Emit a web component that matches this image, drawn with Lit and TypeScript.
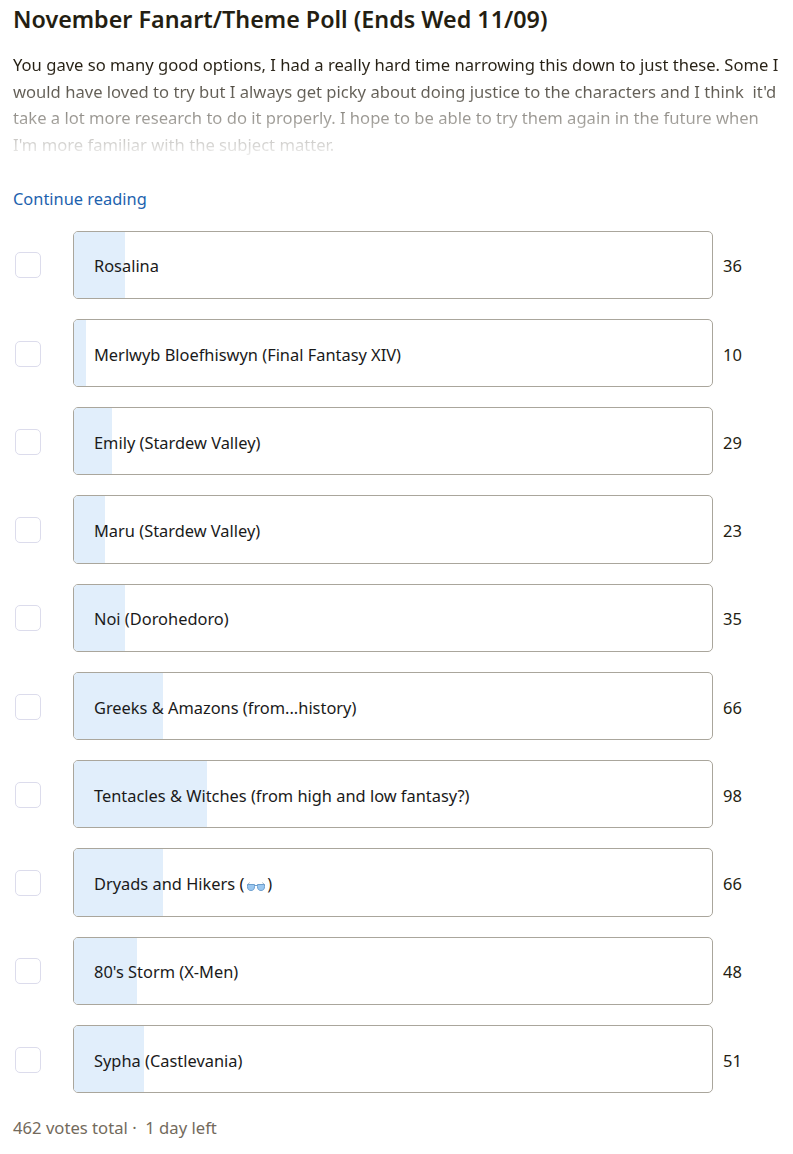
import { LitElement, html, css } from "lit";
import { customElement } from "lit/decorators.js";

const glasses = html`<svg class="emoji" viewBox="0 0 18 9" width="18" height="9" aria-hidden="true">
  <path d="M0.5 3 L2.5 0.5 M17.5 3 L15.5 0.5" stroke="#9fb2c4" stroke-width="1" fill="none"/>
  <path d="M0.5 2.5 H7.5 V4.5 C7.5 7 6.5 8.5 4 8.5 C1.5 8.5 0.5 7 0.5 4.5 Z" fill="#9cc8f0" stroke="#6d9fce" stroke-width="1"/>
  <path d="M10.5 2.5 H17.5 V4.5 C17.5 7 16.5 8.5 14 8.5 C11.5 8.5 10.5 7 10.5 4.5 Z" fill="#9cc8f0" stroke="#6d9fce" stroke-width="1"/>
  <path d="M7.5 3.5 H10.5" stroke="#6d9fce" stroke-width="1"/>
</svg>`;

const rows: { label: unknown; votes: number; w: number }[] = [
  { label: "Rosalina", votes: 36, w: 51 },
  { label: "Merlwyb Bloefhiswyn (Final Fantasy XIV)", votes: 10, w: 12 },
  { label: "Emily (Stardew Valley)", votes: 29, w: 38 },
  { label: "Maru (Stardew Valley)", votes: 23, w: 31 },
  { label: "Noi (Dorohedoro)", votes: 35, w: 51 },
  { label: "Greeks & Amazons (from...history)", votes: 66, w: 89 },
  { label: "Tentacles & Witches (from high and low fantasy?)", votes: 98, w: 133 },
  { label: html`Dryads and Hikers (${glasses})`, votes: 66, w: 89 },
  { label: "80's Storm (X-Men)", votes: 48, w: 63 },
  { label: "Sypha (Castlevania)", votes: 51, w: 70 },
];

@customElement("app-root")
export class AppRoot extends LitElement {
  static styles = css`
    :host {
      display: block;
      width: 793px;
      height: 1154px;
      overflow: hidden;
      background: #fff;
      box-sizing: border-box;
      padding: 0 0 0 13px;
      font-family: "Noto Sans", "Open Sans", sans-serif;
      color: #222;
    }
    .title {
      margin: 0;
      padding-top: 3px;
      font-size: 23.3px;
      line-height: 32px;
      font-weight: 600;
      color: #241e12;
    }
    .body {
      margin: 17px 0 0;
      width: 772px;
      height: 106px;
      font-size: 16.6px;
      line-height: 26.6px;
      color: #241e12;
      -webkit-mask-image: linear-gradient(to bottom, #000 12%, rgba(0, 0, 0, 0.05) 100%);
      mask-image: linear-gradient(to bottom, #000 12%, rgba(0, 0, 0, 0.05) 100%);
    }
    .more {
      display: block;
      margin-top: 28px;
      font-size: 16.4px;
      line-height: 26px;
      color: #1d62ae;
      text-decoration: none;
    }
    .rows {
      display: flex;
      flex-direction: column;
      gap: 20px;
      margin-top: 18.6px;
    }
    .row {
      display: flex;
      align-items: center;
      height: 68.25px;
    }
    .check {
      position: relative;
      top: 0.625px;
      flex: none;
      box-sizing: border-box;
      width: 26px;
      height: 26px;
      margin-left: 2px;
      border: 1px solid #dcdcec;
      border-radius: 5px;
      background: #fff;
    }
    .box {
      flex: none;
      position: relative;
      box-sizing: border-box;
      width: 640px;
      height: 68.25px;
      margin-left: 32px;
      border: 1px solid #aaa69c;
      border-left-width: 1.5px;
      border-radius: 5px;
      overflow: hidden;
      display: flex;
      align-items: center;
      padding-left: 20px;
      font-size: 16.4px;
      color: #1a1a1a;
    }
    .fill {
      position: absolute;
      left: 0;
      top: 0;
      bottom: 0;
      background: #e1eefb;
    }
    .label {
      position: relative;
      top: 1.125px;
      white-space: nowrap;
      display: flex;
      align-items: center;
    }
    .emoji {
      margin: 6px 2px 0 3px;
    }
    .votes {
      position: relative;
      top: 1.125px;
      margin-left: 10px;
      font-size: 16.5px;
      color: #241e12;
    }
    .foot {
      margin-top: 22px;
      font-size: 16.65px;
      line-height: 26px;
      color: #736a5c;
      white-space: pre;
    }
  `;

  render() {
    return html`
      <h1 class="title">November Fanart/Theme Poll (Ends Wed 11/09)</h1>
      <div class="body">You gave so many good options, I had a really hard time narrowing this down to just these. Some I would have loved to try but I always get picky about doing justice to the characters and I think&nbsp; it'd take a lot more research to do it properly. I hope to be able to try them again in the future when I'm more familiar with the subject matter.</div>
      <a class="more" href="#">Continue reading</a>
      <div class="rows">
        ${rows.map(
          (r) => html`<div class="row">
            <span class="check"></span>
            <div class="box">
              <div class="fill" style="width:${r.w}px"></div>
              <span class="label">${r.label}</span>
            </div>
            <span class="votes">${r.votes}</span>
          </div>`
        )}
      </div>
      <div class="foot">462 votes total ·  1 day left</div>
    `;
  }
}
